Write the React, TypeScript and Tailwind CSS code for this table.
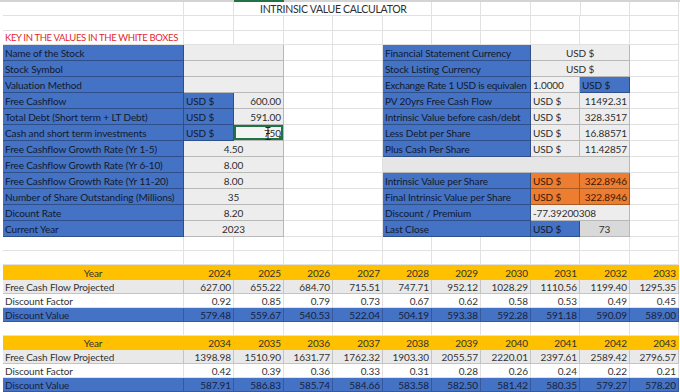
import React from "react"

type Cell = { w: string; t?: string; s?: string; a?: "l" | "r" | "c"; sel?: boolean }

const GRID = "border-[#e1e1e1] text-[#333]"
const BLUE = "bg-[#4472c4] border-[#2f4f8a] text-[#121a2e]"
const GRAY = "bg-[#ededed] border-[#b8b8b8] text-[#2e2e2e]"
const DGRAY = "bg-[#d9d9d9] border-[#b8b8b8] text-[#2e2e2e]"
const ORANGE = "bg-[#ed7d31] border-[#a85a22] text-[#3a1a05]"
const YELLOW = "bg-[#ffc000] border-[#ffc000] text-[#333]"
const ROWGRAY = "bg-[#e9e9e9] border-[#c4c4c4] text-[#333]"
const ROWWHITE = "border-[#e1e1e1] text-[#333]"
const ROWBLUE = "bg-[#4472c4] border-[#35599c] text-[#17223d]"

// column widths A..K
const A = "w-[181px]"
const W50 = "w-[50px]"
const W49 = "w-[49px]"
const BC = "w-[100px]"
const FGH = "w-[148px]"
const IJ = "w-[99px]"
const FJ = "w-[247px]"

function Row({ h, cells }: { h: string; cells: Cell[] }) {
  return (
    <div className={`flex ${h}`}>
      <div className="w-[3px] shrink-0" />
      {cells.map((c, i) => (
        <div
          key={i}
          className={`relative ${c.w} shrink-0 flex items-center overflow-hidden whitespace-nowrap border-r border-b px-[2px] pt-[1px] ${c.s ?? GRID} ${
            c.a === "r" ? "justify-end" : c.a === "c" ? "justify-center" : "justify-start"
          }`}
        >
          {c.t}
          {c.sel && (
            <>
              <div className="absolute inset-0 border-2 border-[#217346]" />
              <div className="absolute right-0 bottom-0 w-[4px] h-[4px] bg-[#217346]" />
              <svg className="absolute left-[31px] top-[2px]" width="6" height="13" viewBox="0 0 6 13">
                <path d="M0.5 0.5h5M3 0.5v12M0.5 12.5h5M1 6.5h4" stroke="#222" strokeWidth="1" fill="none" />
              </svg>
            </>
          )}
        </div>
      ))}
    </div>
  )
}

const empty = (w: string): Cell => ({ w })

const topRows: Cell[][] = [
  [
    { w: A, t: "Name of the Stock", s: BLUE },
    { w: BC, s: GRAY },
    empty(W49), empty(W50),
    { w: FGH, t: "Financial Statement Currency", s: BLUE },
    { w: IJ, t: "USD $", s: GRAY, a: "c" },
    empty(W49),
  ],
  [
    { w: A, t: "Stock Symbol", s: BLUE },
    { w: BC, s: GRAY },
    empty(W49), empty(W50),
    { w: FGH, t: "Stock Listing Currency", s: BLUE },
    { w: IJ, t: "USD $", s: GRAY, a: "c" },
    empty(W49),
  ],
  [
    { w: A, t: "Valuation Method", s: BLUE },
    { w: BC, s: GRAY },
    empty(W49), empty(W50),
    { w: FGH, t: "Exchange Rate 1 USD is equivalen", s: BLUE + " tracking-[-0.25px]" },
    { w: W49, t: "1.0000", s: "bg-[#f0f0f0] border-[#b8b8b8] text-[#2e2e2e]" },
    { w: W50, t: "USD $", s: BLUE },
    empty(W49),
  ],
  [
    { w: A, t: "Free Cashflow", s: BLUE },
    { w: W50, t: "USD $", s: BLUE },
    { w: W50, t: "600.00", s: GRAY, a: "r" },
    empty(W49), empty(W50),
    { w: FGH, t: "PV 20yrs Free Cash Flow", s: BLUE },
    { w: W49, t: "USD $", s: GRAY },
    { w: W50, t: "11492.31", s: GRAY, a: "r" },
    empty(W49),
  ],
  [
    { w: A, t: "Total Debt (Short term + LT Debt)", s: BLUE },
    { w: W50, t: "USD $", s: BLUE },
    { w: W50, t: "591.00", s: GRAY, a: "r" },
    empty(W49), empty(W50),
    { w: FGH, t: "Intrinsic Value before cash/debt", s: BLUE },
    { w: W49, t: "USD $", s: GRAY },
    { w: W50, t: "328.3517", s: GRAY, a: "r" },
    empty(W49),
  ],
  [
    { w: A, t: "Cash and short term investments", s: BLUE },
    { w: W50, t: "USD $", s: BLUE },
    { w: W50, t: "750", s: "bg-[#f4f4f4] border-[#b8b8b8] text-[#2e2e2e]", a: "r", sel: true },
    empty(W49), empty(W50),
    { w: FGH, t: "Less Debt per Share", s: BLUE },
    { w: W49, t: "USD $", s: GRAY },
    { w: W50, t: "16.88571", s: GRAY, a: "r" },
    empty(W49),
  ],
  [
    { w: A, t: "Free Cashflow Growth Rate (Yr 1-5)", s: BLUE },
    { w: BC, t: "4.50", s: GRAY, a: "c" },
    empty(W49), empty(W50),
    { w: FGH, t: "Plus Cash Per Share", s: BLUE },
    { w: W49, t: "USD $", s: GRAY },
    { w: W50, t: "11.42857", s: GRAY, a: "r" },
    empty(W49),
  ],
  [
    { w: A, t: "Free Cashflow Growth Rate (Yr 6-10)", s: BLUE },
    { w: BC, t: "8.00", s: GRAY, a: "c" },
    empty(W49), empty(W50),
    { w: FJ, s: "bg-[#e6e6e6] border-[#b8b8b8]" },
    empty(W49),
  ],
  [
    { w: A, t: "Free Cashflow Growth Rate (Yr 11-20)", s: BLUE },
    { w: BC, t: "8.00", s: GRAY, a: "c" },
    empty(W49), empty(W50),
    { w: FGH, t: "Intrinsic Value per Share", s: BLUE },
    { w: W49, t: "USD $", s: ORANGE },
    { w: W50, t: "322.8946", s: ORANGE, a: "r" },
    empty(W49),
  ],
  [
    { w: A, t: "Number of Share Outstanding (Millions)", s: BLUE },
    { w: BC, t: "35", s: GRAY, a: "c" },
    empty(W49), empty(W50),
    { w: FGH, t: "Final Intrinsic Value per Share", s: BLUE },
    { w: W49, t: "USD $", s: ORANGE },
    { w: W50, t: "322.8946", s: ORANGE, a: "r" },
    empty(W49),
  ],
  [
    { w: A, t: "Dicount Rate", s: BLUE },
    { w: BC, t: "8.20", s: GRAY, a: "c" },
    empty(W49), empty(W50),
    { w: FGH, t: "Discount / Premium", s: BLUE },
    { w: IJ, t: "-77.39200308", s: GRAY },
    empty(W49),
  ],
  [
    { w: A, t: "Current Year", s: BLUE },
    { w: BC, t: "2023", s: GRAY, a: "c" },
    empty(W49), empty(W50),
    { w: FGH, t: "Last Close", s: BLUE },
    { w: W49, t: "USD $", s: BLUE },
    { w: W50, t: "73", s: DGRAY, a: "c" },
    empty(W49),
  ],
]

const colW = [W50, W50, W49, W50, W49, W49, W50, W49, W50, W49]
const blankRow: Cell[] = [empty(A), ...colW.map(empty)]

function table(years: string[], fcf: string[], df: string[], dv: string[]): Cell[][] {
  return [
    [{ w: A, t: "Year", s: YELLOW, a: "c" }, ...years.map((t, i) => ({ w: colW[i], t, s: YELLOW, a: "r" as const }))],
    [{ w: A, t: "Free Cash Flow Projected", s: ROWGRAY }, ...fcf.map((t, i) => ({ w: colW[i], t, s: ROWGRAY, a: "r" as const }))],
    [{ w: A, t: "Discount Factor", s: ROWWHITE }, ...df.map((t, i) => ({ w: colW[i], t, s: ROWWHITE, a: "r" as const }))],
    [{ w: A, t: "Discount Value", s: ROWBLUE }, ...dv.map((t, i) => ({ w: colW[i], t, s: ROWBLUE, a: "r" as const }))],
  ]
}

const t1 = table(
  ["2024", "2025", "2026", "2027", "2028", "2029", "2030", "2031", "2032", "2033"],
  ["627.00", "655.22", "684.70", "715.51", "747.71", "952.12", "1028.29", "1110.56", "1199.40", "1295.35"],
  ["0.92", "0.85", "0.79", "0.73", "0.67", "0.62", "0.58", "0.53", "0.49", "0.45"],
  ["579.48", "559.67", "540.53", "522.04", "504.19", "593.38", "592.28", "591.18", "590.09", "589.00"]
)

const t2 = table(
  ["2034", "2035", "2036", "2037", "2038", "2039", "2040", "2041", "2042", "2043"],
  ["1398.98", "1510.90", "1631.77", "1762.32", "1903.30", "2055.57", "2220.01", "2397.61", "2589.42", "2796.57"],
  ["0.42", "0.39", "0.36", "0.33", "0.31", "0.28", "0.26", "0.24", "0.22", "0.21"],
  ["587.91", "586.83", "585.74", "584.66", "583.58", "582.50", "581.42", "580.35", "579.27", "578.20"]
)

export default function App() {
  return (
    <div className="w-[680px] h-[392px] overflow-hidden bg-white font-['Lato',sans-serif] text-[10px] tracking-[-0.1px] leading-none">
      {/* column header edge */}
      <div className="flex h-[2px] bg-[#d4d4d4]">
        <div className="w-[234px]" />
        <div className="w-[50px] bg-[#217346]" />
      </div>

      <Row
        h="h-[14px]"
        cells={[
          empty(A), empty(W50),
          { w: "w-[198px]", t: "INTRINSIC VALUE CALCULATOR", s: "border-[#e1e1e1] text-[#2e2e2e] pl-[26px] text-[10.5px] tracking-[-0.3px]" },
          empty(W49), empty(W50), empty(W50), empty(W49), empty(W49),
        ]}
      />
      <Row h="h-[15px]" cells={blankRow} />
      <Row
        h="h-[14px]"
        cells={[{ w: A, t: "KEY IN THE VALUES IN THE WHITE BOXES", s: "border-[#e1e1e1] text-[#e3262c] text-[9.5px] tracking-[-0.35px]" }, ...colW.map(empty)]}
      />

      {topRows.map((cells, i) => (
        <Row key={i} h="h-[16px]" cells={cells} />
      ))}

      <Row h="h-[14px]" cells={blankRow} />
      <Row h="h-[14px]" cells={blankRow} />

      {t1.map((cells, i) => (
        <Row key={"a" + i} h={i === 0 ? "h-[15px]" : "h-[14px]"} cells={cells} />
      ))}
      <Row h="h-[14px]" cells={blankRow} />
      {t2.map((cells, i) => (
        <Row key={"b" + i} h="h-[14px]" cells={cells} />
      ))}
    </div>
  )
}
